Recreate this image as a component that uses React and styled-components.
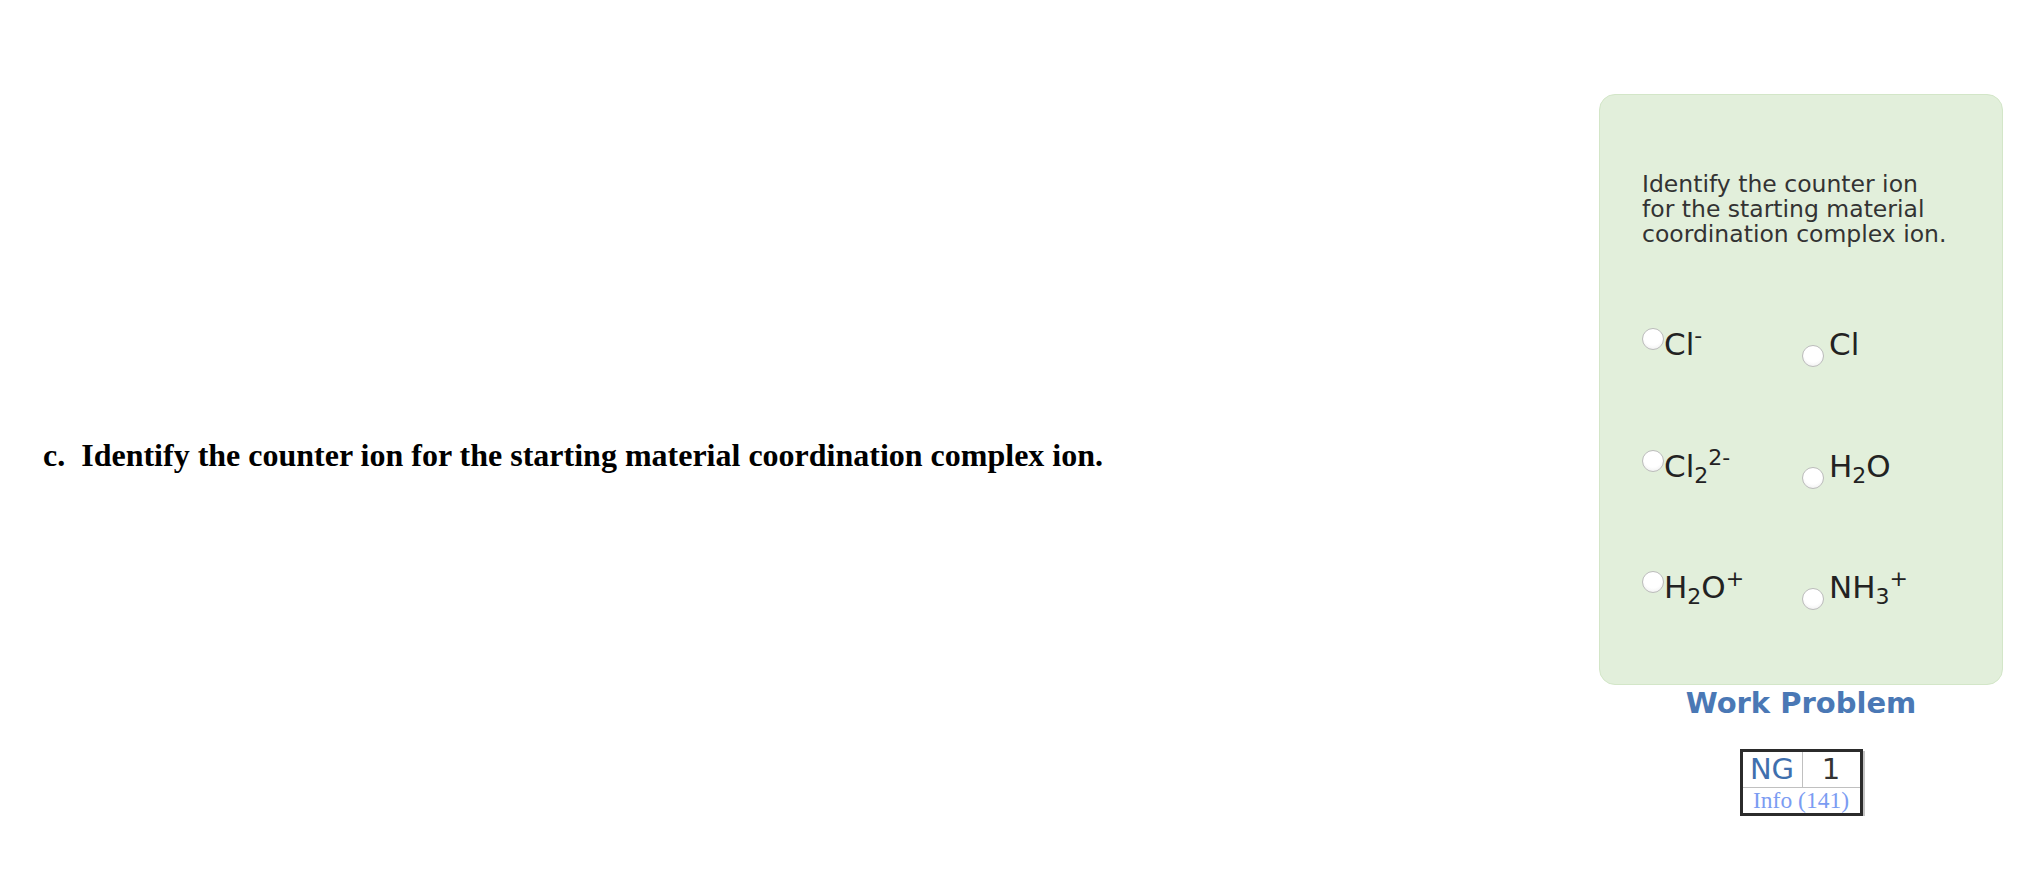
import React from "react"
import styled, { createGlobalStyle } from 'styled-components'

const Global = createGlobalStyle`
  html, body {
    margin: 0;
    padding: 0;
    background: #ffffff;
  }
`;

const Page = styled.div`
  display: flex;
  align-items: center;
  justify-content: space-between;
  width: 2026px;
  box-sizing: border-box;
  padding: 94px 23px 0 43px;
`;

const Question = styled.p`
  margin: 0;
  font-family: "Liberation Serif", "Times New Roman", serif;
  font-weight: bold;
  font-size: 32px;
  color: #000;
  white-space: nowrap;
`;

const Side = styled.div`
  width: 404px;
  display: flex;
  flex-direction: column;
  align-items: center;
`;

const Panel = styled.div`
  width: 100%;
  height: 591px;
  box-sizing: border-box;
  background: #e2efdb;
  border: 1px solid #d3e6c8;
  border-radius: 16px;
  padding: 77px 20px 0 42px;
`;

const Prompt = styled.div`
  font-family: "DejaVu Sans", Verdana, sans-serif;
  font-size: 23.5px;
  line-height: 25px;
  color: #333333;
`;

const Choices = styled.div`
  display: grid;
  grid-template-columns: 160px 160px;
  grid-auto-rows: 40px;
  row-gap: 81.5px;
  margin-top: 77px;
`;

const Choice = styled.label`
  display: flex;
  align-items: flex-start;
  gap: ${p => p.$gap}px;
`;

const Radio = styled.input`
  appearance: none;
  -webkit-appearance: none;
  flex: none;
  width: 22px;
  height: 22px;
  margin: ${p => p.$drop}px 0 0 0;
  border-radius: 50%;
  border: 1px solid #bcbcbc;
  box-sizing: border-box;
  background: radial-gradient(circle at 50% 35%, #ffffff 55%, #e9e9e9 100%);
`;

const Formula = styled.span`
  font-family: "DejaVu Sans", Verdana, sans-serif;
  font-size: 31px;
  line-height: 40px;
  color: #222222;
  white-space: nowrap;

  sub, sup {
    font-size: 22px;
    line-height: 0;
    position: relative;
    vertical-align: baseline;
  }
  sub { top: 6px; }
  sup { top: -12px; }
`;

const WorkLink = styled.a`
  margin-top: 1px;
  font-family: "DejaVu Sans", Verdana, sans-serif;
  font-weight: bold;
  font-size: 29px;
  line-height: 34px;
  color: #4a78b5;
  text-decoration: none;
  cursor: pointer;
`;

const Score = styled.table`
  margin-top: 29px;
  border-collapse: separate;
  border-spacing: 0;
  border: 3px solid #2b2b2b;
  box-shadow: 2px 2px 0 #c4c4c4;
`;

const Cell = styled.td`
  padding: 0;
  height: ${p => p.$h}px;
  width: ${p => p.$w || 'auto'};
  text-align: center;
  font-family: ${p => p.$serif ? '"Liberation Serif", "Times New Roman", serif' : '"DejaVu Sans", Verdana, sans-serif'};
  font-size: ${p => p.$size}px;
  line-height: 1;
  color: ${p => p.$color};
  border-right: ${p => p.$split ? '1px solid #c0c0c0' : 'none'};
  border-bottom: ${p => p.$under ? '1px solid #c0c0c0' : 'none'};
`;

const options = [
  { id: 'a', text: <>Cl<sup>-</sup></> },
  { id: 'b', text: <>Cl</> },
  { id: 'c', text: <>Cl<sub>2</sub><sup>2-</sup></> },
  { id: 'd', text: <>H<sub>2</sub>O</> },
  { id: 'e', text: <>H<sub>2</sub>O<sup>+</sup></> },
  { id: 'f', text: <>NH<sub>3</sub><sup>+</sup></> },
];

export default function App() {
  return (
    <>
      <Global />
      <Page>
        <Question>c.&nbsp;&nbsp;Identify the counter ion for the starting material coordination complex ion.</Question>
        <Side>
          <Panel>
            <Prompt>
              Identify the counter ion<br />
              for the starting material<br />
              coordination complex ion.
            </Prompt>
            <Choices>
              {options.map((o, i) => {
                const right = i % 2 === 1
                return (
                  <Choice key={o.id} $gap={right ? 5 : 0}>
                    <Radio type="radio" name="counter" $drop={right ? 21 : 4} />
                    <Formula>{o.text}</Formula>
                  </Choice>
                )
              })}
            </Choices>
          </Panel>
          <WorkLink>Work Problem</WorkLink>
          <Score>
            <tbody>
              <tr>
                <Cell $h={35} $w="59px" $size={29} $color="#3f6fae" $split $under>NG</Cell>
                <Cell $h={35} $w="57px" $size={29} $color="#333" $under>1</Cell>
              </tr>
              <tr>
                <Cell colSpan={2} $h={25} $size={23.5} $color="#7b9cf2" $serif>Info (141)</Cell>
              </tr>
            </tbody>
          </Score>
        </Side>
      </Page>
    </>
  )
}
